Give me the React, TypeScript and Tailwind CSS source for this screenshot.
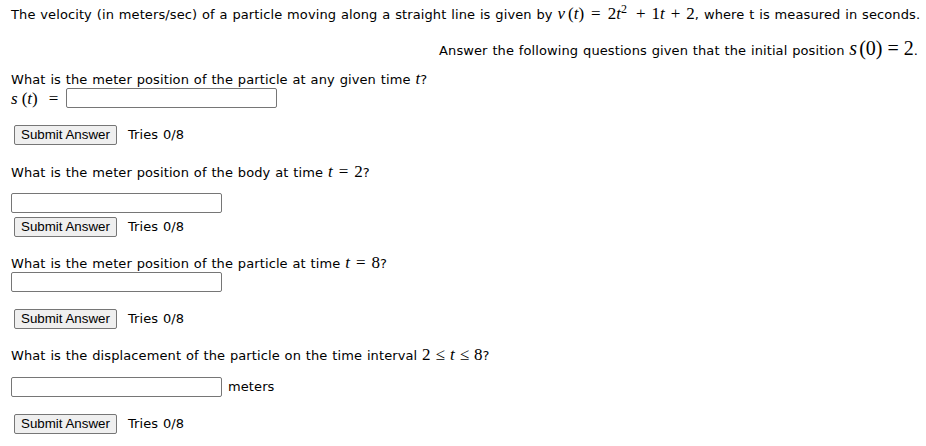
import React from 'react';

// MathJax-ish inline math, serif italic variables
const M = ({ children, size = 'text-[17px]' }: { children: React.ReactNode; size?: string }) => (
  <span className={`font-['Liberation_Serif',serif] leading-none tracking-normal [word-spacing:0] ${size}`}>{children}</span>
);
const I = ({ children }: { children: React.ReactNode }) => <i className="italic">{children}</i>;
const Op = ({ children, cls = 'mx-[6px]' }: { children: React.ReactNode; cls?: string }) => (
  <span className={`inline-block ${cls}`}>{children}</span>
);

function Submit() {
  return (
    <div className="flex h-5 items-center">
      <button className="ml-[3px] h-5 rounded-[2px] border border-[#767676] bg-[#efefef] px-[6px] font-['Liberation_Sans',Arial,sans-serif] text-[13.33px] leading-none tracking-normal [word-spacing:0] text-black">
        Submit Answer
      </button>
      <span className="ml-[11px]">Tries 0/8</span>
    </div>
  );
}

function Field() {
  return <input className="h-5 w-[211px] rounded-[2px] border border-[#767676] bg-white outline-none" />;
}

export default function App() {
  return (
    <div className="bg-white pb-4 pl-[11px] pr-[8px] font-['DejaVu_Sans',Verdana,sans-serif] text-[13px] tracking-[0.1px] [word-spacing:0.6px] text-black">
      <p className="mt-[5px] h-5 whitespace-nowrap leading-[20px]">
        The velocity (in meters/sec) of a particle moving along a straight line is given by{' '}
        <M>
          <I>v</I>
          <span className="ml-[3px]">(</span>
          <I>t</I>)<Op cls="mx-[7px]">=</Op>2<I>t</I>
          <sup className="text-[12px]">2</sup>
          <Op cls="ml-[9px] mr-[6px]">+</Op>1<I>t</I>
          <Op cls="mx-[6px]">+</Op>2
        </M>
        , where t is measured in seconds.
      </p>
      <p className="mt-[13px] h-5 whitespace-nowrap text-right leading-[20px]">
        Answer the following questions given that the initial position{' '}
        <M size="text-[20px]">
          <I>s</I>
          <span className="ml-[2px]">(0)</span>
          <Op cls="mx-[5px]">=</Op>2
        </M>
        .
      </p>

      <p className="mt-[12px] h-[18px] leading-[20px]">
        What is the meter position of the particle at any given time{' '}
        <M>
          <I>t</I>
        </M>
        ?
      </p>
      <div className="flex h-5 items-center">
        <M>
          <I>s</I>
          <span className="ml-[4px]">(</span>
          <I>t</I>)
        </M>
        <span className="ml-[11px] mr-[8px] font-['Liberation_Serif',serif] text-[17px] leading-none">=</span>
        <Field />
      </div>
      <div className="mt-[17px]">
        <Submit />
      </div>

      <p className="mt-[18px] h-[18px] leading-[20px]">
        What is the meter position of the body at time{' '}
        <M>
          <I>t</I>
          <Op>=</Op>2
        </M>
        ?
      </p>
      <div className="mt-[12px] h-5">
        <Field />
      </div>
      <div className="mt-[4px]">
        <Submit />
      </div>

      <p className="mt-[17px] h-[18px] leading-[20px]">
        What is the meter position of the particle at time{' '}
        <M>
          <I>t</I>
          <Op>=</Op>8
        </M>
        ?
      </p>
      <div className="h-5">
        <Field />
      </div>
      <div className="mt-[17px]">
        <Submit />
      </div>

      <p className="mt-[17px] h-[18px] leading-[20px]">
        What is the displacement of the particle on the time interval{' '}
        <M>
          2<Op cls="mx-[5px]">≤</Op>
          <I>t</I>
          <Op cls="mx-[5px]">≤</Op>8
        </M>
        ?
      </p>
      <div className="mt-[13px] flex h-5 items-center">
        <Field />
        <span className="ml-[6px]">meters</span>
      </div>
      <div className="mt-[17px]">
        <Submit />
      </div>
    </div>
  );
}
